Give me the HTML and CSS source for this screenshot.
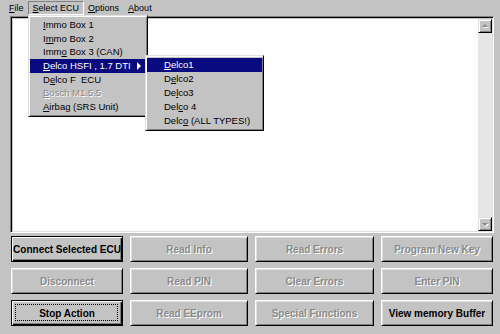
FILE: index.html
```html
<!DOCTYPE html>
<html lang="en">
<head>
  <meta charset="UTF-8" />
  <title>ECU Tool</title>
  <link rel="stylesheet" href="styles.css">
</head>
<body>

  <nav class="menubar">
    <span class="menu"><u>F</u>ile</span>
    <span class="menu open"><u>S</u>elect ECU</span>
    <span class="menu"><u>O</u>ptions</span>
    <span class="menu"><u>A</u>bout</span>
  </nav>

  <!-- Log window -->
  <div class="log">
    <div class="log-text"></div>
    <div class="scrollbar">
      <div class="arrow">
        <svg width="12" height="12" viewBox="0 0 12 12">
          <polygon points="4,8 7,5 10,8" fill="#fff"/>
          <polygon points="3,7 6,4 9,7" fill="#8a8a8a"/>
        </svg>
      </div>
      <div class="track"></div>
      <div class="arrow">
        <svg width="12" height="12" viewBox="0 0 12 12">
          <polygon points="4,6 10,6 7,9" fill="#fff"/>
          <polygon points="3,5 9,5 6,8" fill="#8a8a8a"/>
        </svg>
      </div>
    </div>
  </div>

  <!-- Action buttons -->
  <div class="buttons">
    <button class="btn default">Connect Selected ECU</button>
    <button class="btn" disabled>Read Info</button>
    <button class="btn" disabled>Read Errors</button>
    <button class="btn" disabled>Program New Key</button>

    <button class="btn" disabled>Disconnect</button>
    <button class="btn" disabled>Read PIN</button>
    <button class="btn" disabled>Clear Errors</button>
    <button class="btn" disabled>Enter PIN</button>

    <button class="btn default focus">Stop Action</button>
    <button class="btn" disabled>Read EEprom</button>
    <button class="btn" disabled>Special Functions</button>
    <button class="btn">View memory Buffer</button>
  </div>

  <!-- Select ECU menu -->
  <ul class="dropdown">
    <li><u>I</u>mmo Box 1</li>
    <li>I<u>m</u>mo Box 2</li>
    <li>Imm<u>o</u> Box 3 (CAN)</li>
    <li class="hot has-sub"><u>D</u>elco HSFI , 1.7 DTI</li>
    <li>D<u>e</u>lco F&nbsp; ECU</li>
    <li class="off"><u>B</u>osch M1.5.5</li>
    <li><u>A</u>irbag (SRS Unit)</li>
  </ul>

  <ul class="dropdown sub">
    <li class="hot"><u>D</u>elco1</li>
    <li>D<u>e</u>lco2</li>
    <li>De<u>l</u>co3</li>
    <li>Del<u>c</u>o 4</li>
    <li>Delc<u>o</u> (ALL TYPES!)</li>
  </ul>

</body>
</html>
```

FILE: styles.css
```css
:root {
  --face: #c3c3c3;
  --light: #dfdfdf;
  --shade: #808080;
  --navy: #0a0a80;
}

* {
  box-sizing: border-box;
  margin: 0;
  padding: 0;
}

body {
  width: 500px;
  height: 334px;
  overflow: hidden;
  position: relative;
  background: var(--face);
  color: #000;
  font-family: 'Liberation Sans', Arial, sans-serif;
}

u {
  text-underline-offset: 1px;
}

/* Menu bar */
.menubar {
  display: flex;
  height: 15px;
  padding: 1px 0 0 4.5px;
  font-size: 9px;
}

.menu {
  padding: 0 3.5px;
  line-height: 12px;
  border: 1px solid transparent;
}

.menu.open {
  border-color: var(--shade) #fff #fff var(--shade);
}

/* Log area */
.log {
  display: flex;
  height: 217px;
  margin: 1px 6px 0 10px;
  padding: 1px;
  border: 1px solid;
  border-color: var(--shade) #fff #fff var(--shade);
  box-shadow: inset 1px 1px #000, inset -1px -1px var(--light);
}

.log-text {
  flex: 1;
  background: #fff;
  margin: 1px 0 0 1px;
}

.scrollbar {
  width: 14px;
  display: flex;
  flex-direction: column;
  background: #e6e6e6;
  margin-top: 1px;
}

.track {
  flex: 1;
}

.arrow {
  height: 14px;
  display: flex;
  align-items: center;
  justify-content: center;
  background: var(--face);
  border: 1px solid;
  border-color: var(--light) #000 #000 var(--light);
  box-shadow: inset 1px 1px #fff, inset -1px -1px var(--shade);
}

/* Buttons */
.buttons {
  display: grid;
  grid-template-columns: 112px 118px 119px 112px;
  grid-auto-rows: 26px;
  gap: 6px 7px;
  margin: 3px 0 0 11px;
}

.btn {
  position: relative;
  font-family: inherit;
  font-size: 10px;
  font-weight: bold;
  color: #000;
  background: var(--face);
  border: 1px solid;
  border-color: #fff #000 #000 #fff;
  box-shadow: inset 1px 1px var(--light), inset -1px -1px var(--shade);
}

.btn:disabled {
  color: #8a8a8a;
  text-shadow: 1px 1px #fff;
}

.btn.default {
  border-color: #000;
  box-shadow: inset 1px 1px #fff, inset -1px -1px #000, inset -2px -2px var(--shade);
}

.btn.focus::after {
  content: '';
  position: absolute;
  inset: 3px 4px 4px 3px;
  border: 1px dotted #000;
}

/* Drop-down menus */
.dropdown {
  position: absolute;
  left: 28px;
  top: 15px;
  width: 120px;
  list-style: none;
  padding: 2px 1px;
  background: var(--face);
  border: 1px solid;
  border-color: var(--light) #000 #000 var(--light);
  box-shadow: inset 1px 1px #fff, inset -1px -1px var(--shade);
  font-size: 9.5px;
}

.dropdown li {
  position: relative;
  height: 13.7px;
  line-height: 13.7px;
  padding-left: 13px;
  white-space: nowrap;
}

.dropdown li.hot {
  background: var(--navy);
  color: #fff;
}

.dropdown li.off {
  color: #8a8a8a;
  text-shadow: 1px 1px #fff;
}

.dropdown li.has-sub::after {
  content: '';
  position: absolute;
  right: 5px;
  top: 3px;
  border-left: 4px solid #fff;
  border-top: 4px solid transparent;
  border-bottom: 4px solid transparent;
}

.dropdown.sub {
  left: 145px;
  top: 55px;
  width: 119px;
}

.dropdown.sub li {
  height: 14px;
  line-height: 14px;
  padding-left: 17px;
}
```
